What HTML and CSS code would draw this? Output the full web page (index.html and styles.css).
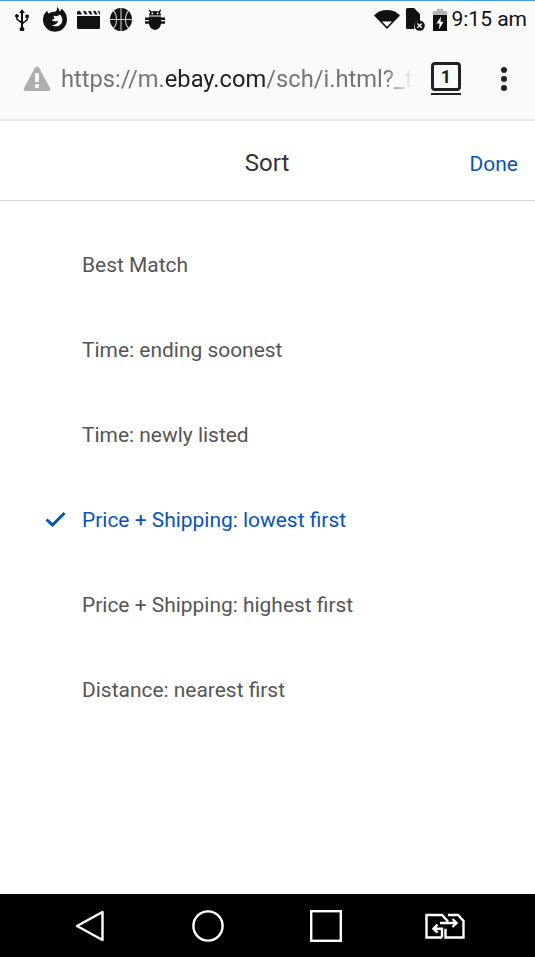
FILE: index.html
```html
<!DOCTYPE html>
<html lang="en">
<head>
<meta charset="utf-8">
<title>Sort</title>
<link rel="stylesheet" href="styles.css">
</head>
<body>
<div class="page">
  <div class="status">
    <div class="status-left">
      <svg class="i-usb" width="16" height="22" viewBox="0 0 16 22"><path d="M8 0 L10.8 4 H9 V13 L12.4 10.4 V8.8 H11.4 V5.8 H14.8 V8.8 H13.8 V11.2 L9 15 V18 A2.4 2.4 0 1 1 7 18 V14.2 L2.2 10.6 V8.6 A1.8 1.8 0 1 1 3.6 8.6 V9.8 L7 12.3 V4 H5.2 Z" fill="#111"/></svg>
      <svg class="i-fox" width="24" height="25" viewBox="0 0 24 25"><path d="M14 0 C16 1.5 16.5 3 16.3 4.4 C17.8 4 18.5 3 18.5 1.8 C21.8 4 24 7.8 24 12.8 A12 12 0 1 1 0.6 9 C1.2 7 2.5 5.2 4.5 3.8 C4.4 5 4.8 6 5.6 6.6 C7.2 5.4 9.5 4.5 11.6 4.8 C13.2 4.6 14.4 2.8 14 0 Z" fill="#111"/><path d="M16.5 7.5 C19.4 9.5 20.2 13.5 18.4 16.4 C16 19.8 11.4 20.2 8.8 18 C12.2 18.2 14.8 16.4 15 14 C12.6 14.8 9.8 14.2 8.6 13 L11.8 11.4 C10.8 10.4 10.4 9.4 10.8 8.4 C12.8 9.6 15 9.4 16.5 7.5 Z" fill="#fafafa"/></svg>
      <svg class="i-clap" width="23" height="18" viewBox="0 0 23 18"><path d="M0 5 V16.5 Q0 18 1.5 18 H21.5 Q23 18 23 16.5 V5 Z M0 3.6 V1.5 Q0 0 1.5 0 H3 L5 3.6 Z M6 0 H8.5 L10.5 3.6 H8 Z M11 0 H13.5 L15.5 3.6 H13 Z M16 0 H18.5 L20.5 3.6 H18 Z M20.5 0 H21.5 Q23 0 23 1.5 V3.6 H22.5 Z" fill="#111"/></svg>
      <svg class="i-ball" width="22" height="23" viewBox="0 0 22 23"><ellipse cx="11" cy="11.5" rx="11" ry="11.5" fill="#111"/><path d="M11 0 V23 M0 11.5 H22 M3.5 3 C7.5 6.5 7.5 16.5 3.5 20 M18.5 3 C14.5 6.5 14.5 16.5 18.5 20" fill="none" stroke="#c8c8c8" stroke-width="1.1"/></svg>
      <svg class="i-bug" width="20" height="21" viewBox="0 0 20 21"><path d="M4.5 0.5 L6.6 2.6 C8.2 1.9 11.8 1.9 13.4 2.6 L15.5 0.5 L16.2 1.4 L14.8 3.4 C15.7 4.3 16 5.4 16 6.6 H4 C4 5.4 4.3 4.3 5.2 3.4 L3.8 1.4 Z" fill="#111"/><path d="M0 8.4 H4 V7.6 H16 V8.4 H20 V11 H16 V12.2 H20 V14.8 H16 C15.5 18.5 13 20.8 10 20.8 C7 20.8 4.5 18.5 4 14.8 H0 V12.2 H4 V11 H0 Z" fill="#111"/><circle cx="7.4" cy="4.4" r="0.9" fill="#fafafa"/><circle cx="12.6" cy="4.4" r="0.9" fill="#fafafa"/></svg>
    </div>
    <div class="status-right">
      <svg class="i-wifi" width="26" height="19" viewBox="0 0 26 19"><path d="M0 5.5 C7 -1.8 19 -1.8 26 5.5 L13 19 Z" fill="#111"/><path d="M8 11.5 H18 L13 16.8 Z" fill="#fafafa"/></svg>
      <svg class="i-file" width="19" height="23" viewBox="0 0 19 23"><path d="M0 1.5 Q0 0 1.5 0 H8 L14 6 V13 A5.5 5.5 0 0 0 8.5 21 H1.5 Q0 21 0 19.5 Z" fill="#111"/><circle cx="13.6" cy="17.6" r="5.2" fill="#111"/><path d="M11.4 15.4 L15.8 19.8 M15.8 15.4 L11.4 19.8" stroke="#fafafa" stroke-width="1.4"/></svg>
      <svg class="i-batt" width="14" height="22" viewBox="0 0 14 22"><path d="M4 0 H10 V2 H14 V22 H0 V2 H4 Z" fill="#b4b4b4"/><path d="M0 6 H14 V22 H0 Z" fill="#111"/><path d="M8 7.5 L3.5 14.5 H6.5 L6 20.5 L10.5 12.8 H7.5 Z" fill="#fafafa"/></svg>
      <span class="time">9:15 am</span>
    </div>
  </div>
  <div class="toolbar">
    <svg class="i-warn" width="28" height="28" viewBox="0 0 28 28"><path d="M14 1.5 Q15.5 1.5 16.2 3 L27 23 Q28 26 25 26 H3 Q0 26 1 23 L11.8 3 Q12.5 1.5 14 1.5 Z" fill="#aeaeae"/><rect x="12" y="8" width="4" height="9" rx="1" fill="#fafafa"/><circle cx="14" cy="21" r="2.2" fill="#fafafa"/></svg>
    <div class="url"><span class="dim">https://m.</span><span class="host">ebay.com</span><span class="dim">/sch/i.html?_f</span></div>
    <div class="tabs"><div class="tab-box">1</div><div class="tab-line"></div></div>
    <div class="menu"><i></i><i></i><i></i></div>
  </div>
  <div class="head">
    <span class="side"></span>
    <span class="title">Sort</span>
    <span class="side done">Done</span>
  </div>
  <ul class="list">
    <li class="row">Best Match</li>
    <li class="row">Time: ending soonest</li>
    <li class="row">Time: newly listed</li>
    <li class="row on"><svg class="check" width="21" height="16" viewBox="0 0 21 16"><path d="M1.5 8.5 L7.5 14 L19.5 2" fill="none" stroke="#0654ba" stroke-width="3"/></svg>Price + Shipping: lowest first</li>
    <li class="row">Price + Shipping: highest first</li>
    <li class="row">Distance: nearest first</li>
  </ul>
  <div class="nav">
    <svg width="30" height="32" viewBox="0 0 30 32"><path d="M27.5 2 V30 L2 16 Z" fill="none" stroke="#fff" stroke-width="2.4" stroke-linejoin="round"/></svg>
    <svg width="32" height="32" viewBox="0 0 32 32"><circle cx="16" cy="16" r="14.6" fill="none" stroke="#fff" stroke-width="2.4"/></svg>
    <svg width="32" height="32" viewBox="0 0 32 32"><rect x="1.2" y="1.2" width="29.6" height="29.6" fill="none" stroke="#fff" stroke-width="2.4"/></svg>
    <svg width="40" height="26" viewBox="0 0 40 26"><path d="M17 24.5 H1.5 V2 H17 L23 8.5 M17 24.5 V15.7 H8.5 M12.5 11.7 L8.5 15.7 L12.5 19.7 M23 2 H33 L38.5 8 V24.5 H20.5 V15.7 M15 10 H31.5 M27.5 6 L31.5 10 L27.5 14" fill="none" stroke="#fff" stroke-width="2.4"/></svg>
  </div>
</div>
</body>
</html>
```

FILE: styles.css
```css
* { box-sizing: border-box; }
html, body { margin: 0; padding: 0; }
body { font-family: Roboto, "Liberation Sans", sans-serif; background: #fff; }
.page { width: 535px; height: 957px; display: flex; flex-direction: column; overflow: hidden; }

.status { height: 38px; background: #fafafa; border-top: 1px solid #3d95ee; display: flex; justify-content: space-between; align-items: center; padding: 0 8px 0 14px; flex: none; }
.status-left, .status-right { display: flex; align-items: center; }
.i-usb { margin-right: 13px; }
.i-fox { margin-right: 10px; }
.i-clap { margin-right: 10px; }
.i-ball { margin-right: 13px; }
.i-wifi { margin-right: 6px; }
.i-file { margin-right: 8px; }
.i-batt { margin-right: 4px; }
.time { font-size: 21px; color: #111; margin-top: -1px; }

.toolbar { height: 83px; background: #fafafa; border-bottom: 2px solid #e6e6e6; display: flex; align-items: center; padding: 0 0 0 23px; flex: none; }
.i-warn { flex: none; margin-right: 10px; }
.url { width: 352px; font-size: 23.7px; white-space: nowrap; flex: none; -webkit-mask-image: linear-gradient(to right, #000 92%, transparent); mask-image: linear-gradient(to right, #000 92%, transparent); }
.dim { color: #757575; }
.host { color: #222; }
.tabs { margin-left: 18px; width: 30px; flex: none; display: flex; flex-direction: column; gap: 2px; margin-top: -1px; }
.tab-box { height: 29px; border: 3px solid #222; border-radius: 4px; font-size: 18px; font-weight: 700; color: #222; display: flex; align-items: center; justify-content: center; }
.tab-line { height: 2px; background: #222; }
.menu { margin-left: 40px; display: flex; flex-direction: column; gap: 3px; }
.menu i { display: block; width: 6px; height: 6px; border-radius: 50%; background: #222; }

.head { height: 80px; border-bottom: 1px solid #d8d8d8; display: flex; align-items: center; justify-content: space-between; padding: 5px 17px 0; flex: none; }
.side { width: 60px; font-size: 21px; text-align: right; }
.done { color: #0654ba; padding-top: 2px; }
.title { font-size: 24px; color: #333; margin-left: -1px; }

.list { list-style: none; margin: 0; padding: 21px 0 0; flex: 1; }
.row { position: relative; height: 85px; padding-left: 82px; font-size: 20.95px; color: #555; display: flex; align-items: center; }
.row.on { color: #0654ba; }
.check { position: absolute; left: 45px; top: 34px; }

.nav { height: 63px; background: #000; display: flex; align-items: center; padding-left: 75px; flex: none; }
.nav svg:nth-child(1) { margin-right: 87px; }
.nav svg:nth-child(2) { margin-right: 86px; }
.nav svg:nth-child(3) { margin-right: 83px; }
```
